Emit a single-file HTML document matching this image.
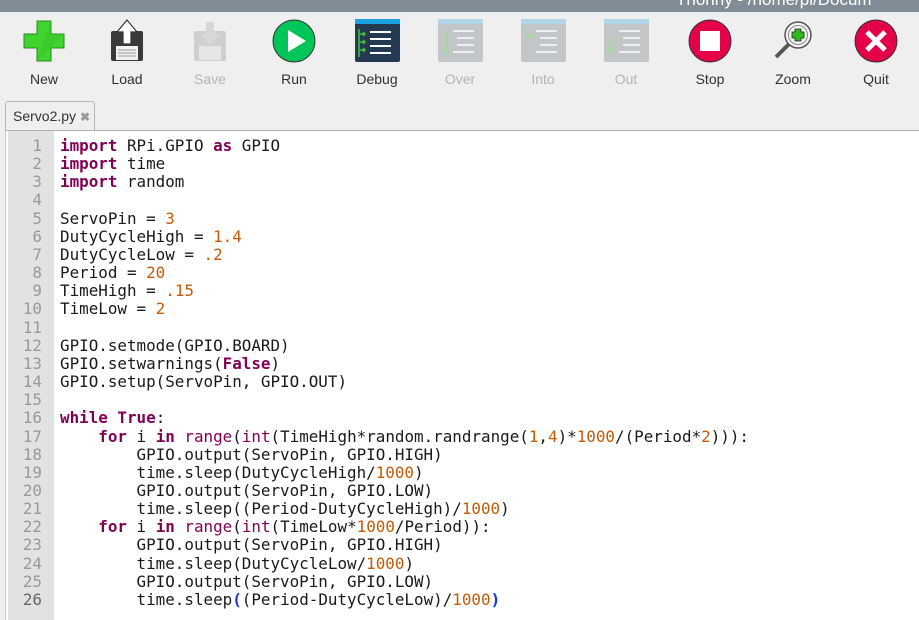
<!DOCTYPE html>
<html><head><meta charset="utf-8"><style>
body{margin:0;width:919px;height:619px;overflow:hidden;background:#efefef;font-family:"Liberation Sans",sans-serif;position:relative}
.title{position:absolute;left:0;top:0;width:919px;height:12px;background:#818d96;overflow:hidden}
.title span{position:absolute;left:676px;top:-10px;color:#fff;font-size:17px;white-space:nowrap}
.tb{position:absolute;top:18px;width:60px;text-align:center}
.tb svg{display:block;margin:0 auto;width:46px;height:46px}
.tb div{font-size:14px;color:#303030;margin-top:7px}
.tb.dis div{color:#b3b3b3}
.tab{position:absolute;left:5px;top:101px;width:90px;height:29px;border:1px solid #b8b8b8;border-bottom:none;background:#efefef;border-radius:3px 3px 0 0;font-size:14px;color:#333;line-height:29px;padding-left:7px;box-sizing:border-box}
.tab b{color:#999;font-size:12px}
.ed{position:absolute;left:5px;top:130px;width:914px;height:489px;background:#fff;border-top:1px solid #b0b0b0;border-left:1px solid #c8c8c8}
.gut{position:absolute;left:2px;top:0;width:46px;height:489px;background:#e2e2e2}
pre{margin:0;font-family:"DejaVu Sans Mono","Liberation Mono",monospace;font-size:15.9px;line-height:18.16px;position:absolute;top:6px;color:#1a1a1a}
.ln{left:2px;width:34px;text-align:right;color:#999}
.code{left:54px}
.k{color:#7f0055;font-weight:bold}.b{color:#7f0055}.n{color:#c25c07}.p{color:#1a2cff;font-weight:bold}
</style></head><body>
<div class="title"><span>Thonny  -  /home/pi/Docum</span></div>

<div class="tb" style="left:14px"><svg viewBox="0 0 46 46"><path d="M16 3h14v13h13v14H30v13H16V30H3V16h13z" fill="#3fd52e" stroke="#2a8a20" stroke-width="1"/><path d="M30 3v13h13L16 43z" fill="#36c027" opacity=".5"/></svg><div>New</div></div>
<div class="tb" style="left:97px"><svg viewBox="0 0 46 46"><rect x="7" y="13" width="32" height="30" rx="2" fill="#3a3a3a"/><rect x="12" y="28" width="22" height="14" fill="#f2f2f2"/><path d="M14 32h18M14 35h18M14 38h18" stroke="#999"/><path d="M23 2L13 14h6v12h8V14h6z" fill="#fff" stroke="#333" stroke-width="1.2"/></svg><div>Load</div></div>
<div class="tb dis" style="left:180px"><svg viewBox="0 0 46 46"><rect x="7" y="13" width="32" height="30" rx="2" fill="#cfcfcf"/><rect x="12" y="28" width="22" height="14" fill="#e6e6e6"/><path d="M19 4h8v12h6L23 28 13 16h6z" fill="#d8d8d8"/></svg><div>Save</div></div>
<div class="tb" style="left:264px"><svg viewBox="0 0 46 46"><circle cx="23" cy="23" r="21" fill="#00c65a" stroke="#333" stroke-width="1"/><path d="M17 12v22l18-11z" fill="#fff"/></svg><div>Run</div></div>
<div class="tb" style="left:347px"><svg viewBox="0 0 46 46"><rect x="1" y="1" width="45" height="43" rx="2" fill="#233a52"/><rect x="1" y="1" width="45" height="5" fill="#1aa3e0"/><path d="M16 14h21M16 21h21M16 28h21M16 35h21" stroke="#fff" stroke-width="2"/><path d="M5 11v28M5 16h6M5 24h6M5 32h6M9 14l2 2-2 2M9 22l2 2-2 2M9 30l2 2-2 2" stroke="#3ec52e" stroke-width="1.5" fill="none"/></svg><div>Debug</div></div>
<div class="tb dis" style="left:430px"><svg viewBox="0 0 46 46"><rect x="1" y="1" width="45" height="43" rx="2" fill="#c3c6c8"/><rect x="1" y="1" width="45" height="5" fill="#b3d6e6"/><path d="M16 13h21M20 20h17M20 27h17M16 34h21" stroke="#eee" stroke-width="2"/><path d="M10 13v22M6 31l4 4 4-4" stroke="#a9d6a0" stroke-width="2" fill="none"/></svg><div>Over</div></div>
<div class="tb dis" style="left:513px"><svg viewBox="0 0 46 46"><rect x="1" y="1" width="45" height="43" rx="2" fill="#c3c6c8"/><rect x="1" y="1" width="45" height="5" fill="#b3d6e6"/><path d="M16 13h21M20 20h17M20 27h17M16 34h21" stroke="#eee" stroke-width="2"/><path d="M6 10v8h8M11 15l3 3-3 3" stroke="#a9d6a0" stroke-width="2" fill="none"/></svg><div>Into</div></div>
<div class="tb dis" style="left:596px"><svg viewBox="0 0 46 46"><rect x="1" y="1" width="45" height="43" rx="2" fill="#c3c6c8"/><rect x="1" y="1" width="45" height="5" fill="#b3d6e6"/><path d="M16 13h21M20 20h17M20 27h17M16 34h21" stroke="#eee" stroke-width="2"/><path d="M15 22H8v13M4 31l4 4 4-4" stroke="#a9d6a0" stroke-width="2" fill="none"/></svg><div>Out</div></div>
<div class="tb" style="left:680px"><svg viewBox="0 0 46 46"><circle cx="23" cy="23" r="21" fill="#e5004a" stroke="#333" stroke-width="1"/><rect x="13" y="13" width="20" height="20" fill="#fff"/></svg><div>Stop</div></div>
<div class="tb" style="left:763px"><svg viewBox="0 0 46 46"><circle cx="28" cy="17" r="13" fill="#f4f4f4" stroke="#555" stroke-width="1.5"/><circle cx="28" cy="17" r="9.5" fill="none" stroke="#888"/><path d="M19 26L6 39" stroke="#555" stroke-width="4"/><path d="M25 11h6v3h3v6h-3v3h-6v-3h-3v-6h3z" fill="#2dbb1f" stroke="#222" stroke-width=".8"/></svg><div>Zoom</div></div>
<div class="tb" style="left:846px"><svg viewBox="0 0 46 46"><circle cx="23" cy="23" r="21" fill="#e5004a" stroke="#333" stroke-width="1"/><path d="M14 14l18 18M32 14L14 32" stroke="#fff" stroke-width="5"/></svg><div>Quit</div></div>

<div class="tab">Servo2.py <b>✖</b></div>
<div class="ed"><div class="gut"></div>
<pre class="ln">1
2
3
4
5
6
7
8
9
10
11
12
13
14
15
16
17
18
19
20
21
22
23
24
25
<span style="color:#666">26</span></pre>
<pre class="code"><span class="k">import</span> RPi.GPIO <span class="k">as</span> GPIO
<span class="k">import</span> time
<span class="k">import</span> random

ServoPin = <span class="n">3</span>
DutyCycleHigh = <span class="n">1.4</span>
DutyCycleLow = <span class="n">.2</span>
Period = <span class="n">20</span>
TimeHigh = <span class="n">.15</span>
TimeLow = <span class="n">2</span>

GPIO.setmode(GPIO.BOARD)
GPIO.setwarnings(<span class="k">False</span>)
GPIO.setup(ServoPin, GPIO.OUT)

<span class="k">while</span> <span class="k">True</span>:
    <span class="k">for</span> i <span class="k">in</span> <span class="b">range</span>(<span class="b">int</span>(TimeHigh*random.randrange(<span class="n">1</span>,<span class="n">4</span>)*<span class="n">1000</span>/(Period*<span class="n">2</span>))):
        GPIO.output(ServoPin, GPIO.HIGH)
        time.sleep(DutyCycleHigh/<span class="n">1000</span>)
        GPIO.output(ServoPin, GPIO.LOW)
        time.sleep((Period-DutyCycleHigh)/<span class="n">1000</span>)
    <span class="k">for</span> i <span class="k">in</span> <span class="b">range</span>(<span class="b">int</span>(TimeLow*<span class="n">1000</span>/Period)):
        GPIO.output(ServoPin, GPIO.HIGH)
        time.sleep(DutyCycleLow/<span class="n">1000</span>)
        GPIO.output(ServoPin, GPIO.LOW)
        time.sleep<span class="p">(</span>(Period-DutyCycleLow)/<span class="n">1000</span><span class="p">)</span></pre>
</div>
</body></html>
